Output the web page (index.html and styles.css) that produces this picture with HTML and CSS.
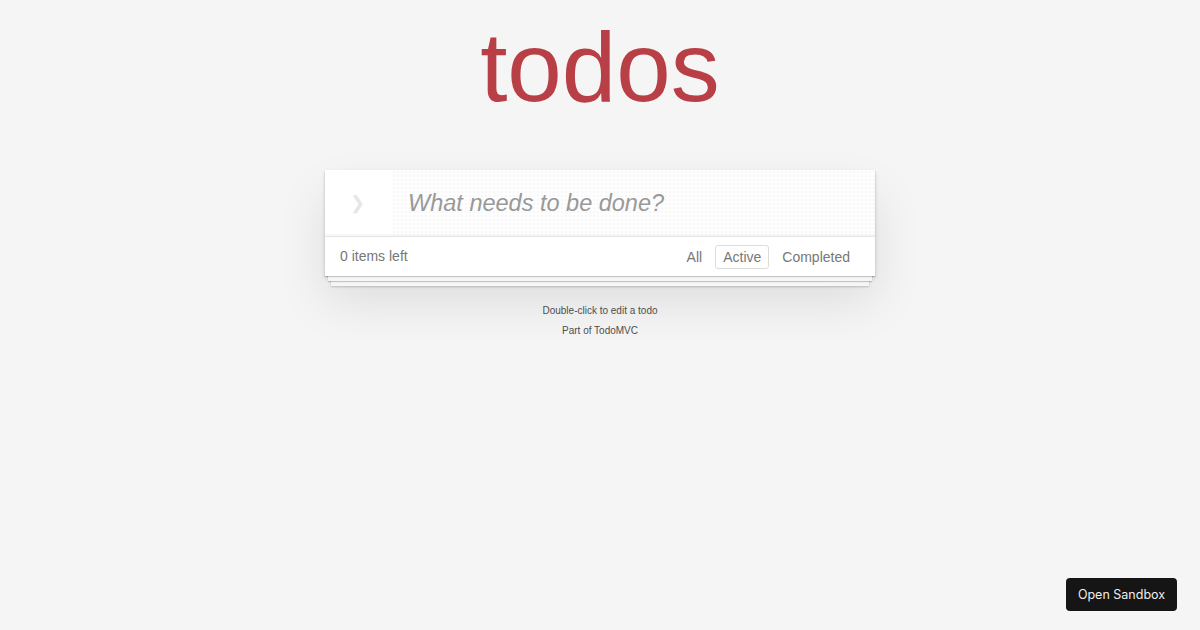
FILE: index.html
```html
<!DOCTYPE html>
<html lang="en">
<head>
    <meta charset="UTF-8">
    <title>TodoMVC</title>
    <link rel="stylesheet" href="styles.css">
</head>
<body>
    <section class="todoapp">
        <header class="header">
            <h1>todos</h1>
        </header>

        <div class="card">
            <div class="new-row">
                <label class="toggle-all">❯</label>
                <input class="new-todo" placeholder="What needs to be done?" autocomplete="off">
            </div>
            <footer class="footer">
                <span class="todo-count">0 items left</span>
                <ul class="filters">
                    <li><a href="#/">All</a></li>
                    <li><a href="#/active" class="selected">Active</a></li>
                    <li><a href="#/completed">Completed</a></li>
                </ul>
            </footer>
        </div>
    </section>

    <div class="info">
        <p>Double-click to edit a todo</p>
        <p>Part of <a href="#">TodoMVC</a></p>
    </div>

    <button class="sandbox-btn">Open Sandbox</button>
</body>
</html>
```

FILE: styles.css
```css
html, body {
    margin: 0;
    padding: 0;
}

body {
    font-family: 'Liberation Sans', Arial, sans-serif;
    line-height: 1.4em;
    color: #111;
    background: #f5f5f5;
    font-weight: 300;
}

.todoapp {
    width: 550px;
    margin: 0 auto;
    padding-top: 7px;
}

.header h1 {
    margin: 0;
    height: 163px;
    font-size: 98px;
    line-height: 120px;
    font-weight: 400;
    text-align: center;
    color: #b83f45;
}

/* the last shadows give the stacked paper look under the card */
.card {
    background: #fff;
    box-shadow: 0 1px 1px rgba(0, 0, 0, 0.2),
                0 8px 0 -3px #f6f6f6,
                0 9px 1px -3px rgba(0, 0, 0, 0.2),
                0 16px 0 -6px #f6f6f6,
                0 17px 2px -6px rgba(0, 0, 0, 0.2),
                0 2px 4px 0 rgba(0, 0, 0, 0.15),
                0 25px 50px 0 rgba(0, 0, 0, 0.1);
}

.new-row {
    display: flex;
    align-items: center;
    height: 66px;
    box-shadow: inset 0 -2px 1px rgba(0, 0, 0, 0.03);
}

.toggle-all {
    width: 67px;
    text-align: center;
    font-size: 18px;
    color: #e6e6e6;
    padding-right: 2px;
    box-sizing: border-box;
}

.new-todo {
    flex: 1;
    height: 100%;
    box-sizing: border-box;
    border: none;
    outline: none;
    padding: 16px;
    font-family: inherit;
    font-size: 23.5px;
    font-style: italic;
    font-weight: 300;
    background-color: rgba(0, 0, 0, 0.003);
    background-image: radial-gradient(rgba(0, 0, 0, 0.03) 0.7px, transparent 0.8px);
    background-size: 4px 4px;
}

.new-todo::placeholder {
    color: #999;
    font-style: italic;
}

.footer {
    display: flex;
    align-items: center;
    justify-content: space-between;
    height: 39px;
    padding: 0 15px;
    border-top: 1px solid #e6e6e6;
    color: #777;
    font-size: 14px;
}

.filters {
    display: flex;
    gap: 5px;
    margin: 0 2px 0 0;
    padding: 0;
    list-style: none;
}

.filters a {
    display: block;
    padding: 0 7px;
    line-height: 22px;
    color: #777;
    text-decoration: none;
    border: 1px solid transparent;
    border-radius: 3px;
}

.filters a.selected {
    border-color: #dcdcdc;
}

.info {
    margin-top: 25px;
    color: #4d4d4d;
    font-size: 10px;
    text-align: center;
}

.info p {
    margin: 0;
    line-height: 20px;
}

.info a {
    color: inherit;
    text-decoration: none;
}

.sandbox-btn {
    position: fixed;
    right: 23px;
    bottom: 19px;
    width: 111px;
    height: 33px;
    padding: 0;
    border: none;
    border-radius: 4px;
    background: #151515;
    color: #eee;
    font-family: Inter, sans-serif;
    font-size: 12.5px;
    cursor: pointer;
}
```
